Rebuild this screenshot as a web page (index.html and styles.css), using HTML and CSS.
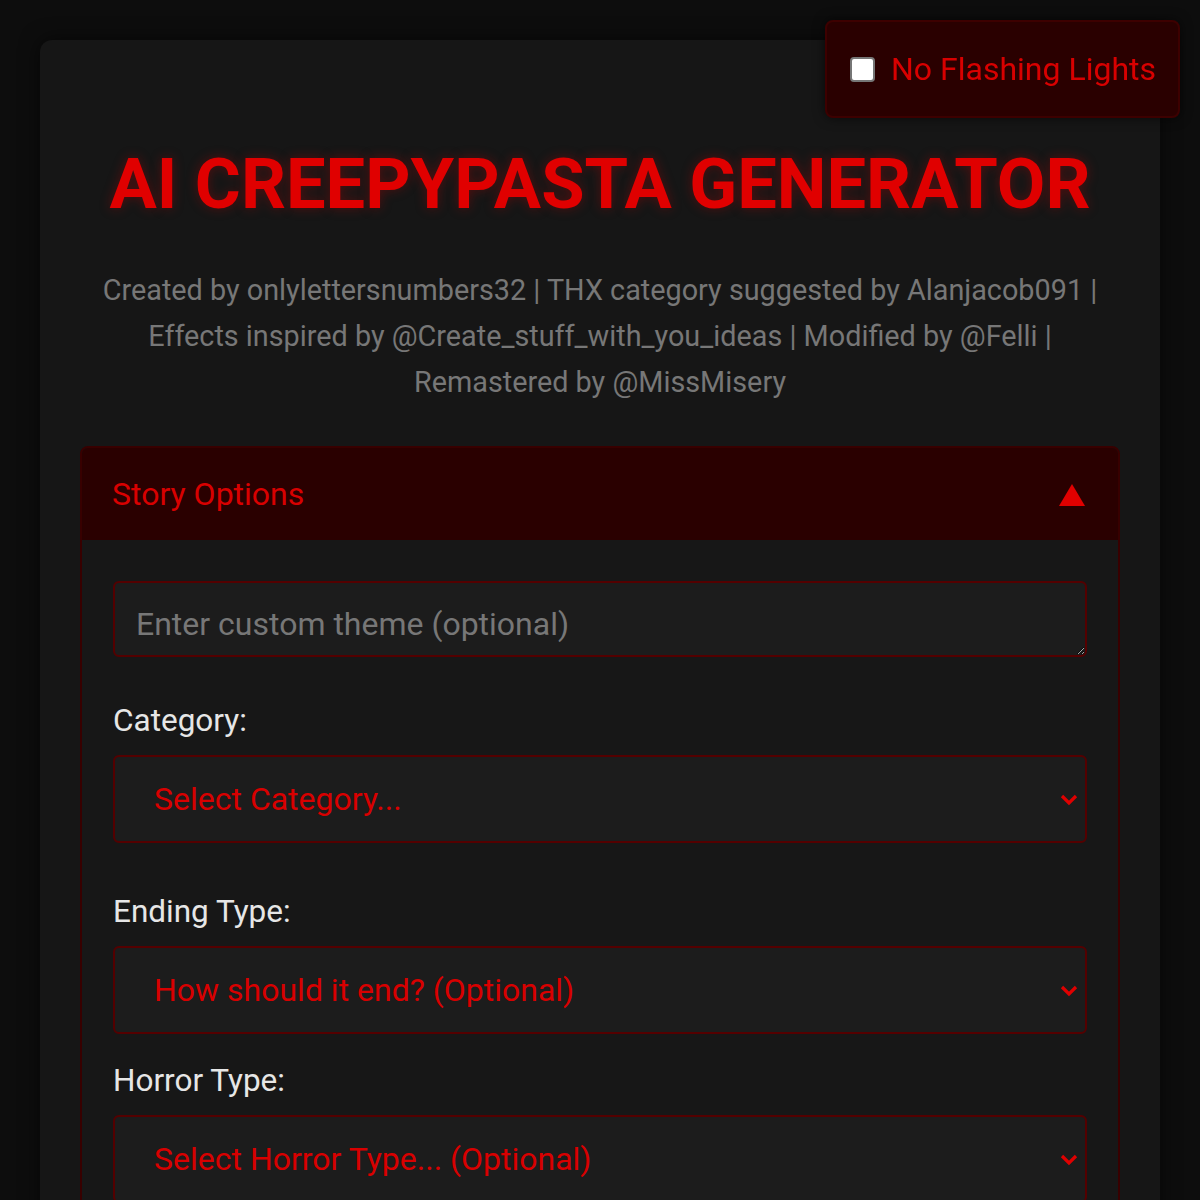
FILE: index.html
```html
<!DOCTYPE html>
<html lang="en">
<head>
<meta charset="utf-8">
<title>AI Creepypasta Generator</title>
<link rel="stylesheet" href="styles.css">
</head>
<body>
<label class="flash-toggle"><input type="checkbox" class="flash-check"><span>No Flashing Lights</span></label>
<main class="container">
  <h1 class="title">AI CREEPYPASTA GENERATOR</h1>
  <p class="credits">Created by onlylettersnumbers32 | THX category suggested by Alanjacob091 | Effects inspired by @Create_stuff_with_you_ideas | Modified by @Felli | Remastered by @MissMisery</p>
  <section class="panel">
    <div class="panel-header">
      <span class="panel-title">Story Options</span>
      <svg class="panel-arrow" width="26" height="22" viewBox="0 0 26 22"><polygon points="13,0 26,22 0,22" fill="#e00000"/></svg>
    </div>
    <div class="panel-body">
      <textarea class="theme-input" placeholder="Enter custom theme (optional)"></textarea>
      <label class="field-label">Category:</label>
      <div class="select-wrap select-wrap--spaced">
        <select class="field-select"><option>Select Category...</option></select>
        <svg class="chevron" width="18" height="12" viewBox="0 0 18 12"><polyline points="2,2 9,9 16,2" fill="none" stroke="#e00000" stroke-width="3.2"/></svg>
      </div>
      <label class="field-label">Ending Type:</label>
      <div class="select-wrap">
        <select class="field-select"><option>How should it end? (Optional)</option></select>
        <svg class="chevron" width="18" height="12" viewBox="0 0 18 12"><polyline points="2,2 9,9 16,2" fill="none" stroke="#e00000" stroke-width="3.2"/></svg>
      </div>
      <label class="field-label">Horror Type:</label>
      <div class="select-wrap">
        <select class="field-select"><option>Select Horror Type... (Optional)</option></select>
        <svg class="chevron" width="18" height="12" viewBox="0 0 18 12"><polyline points="2,2 9,9 16,2" fill="none" stroke="#e00000" stroke-width="3.2"/></svg>
      </div>
    </div>
  </section>
</main>
</body>
</html>
```
FILE: styles.css
```css
* { box-sizing: border-box; }
html, body { margin: 0; }
body {
  background: #0d0d0d;
  font-family: Roboto, "Liberation Sans", sans-serif;
  padding: 40px 40px 0;
  min-height: 1200px;
}
.container {
  background: #161616;
  border-radius: 12px;
  padding: 102px 40px 40px;
  box-shadow: 0 0 20px rgba(0,0,0,0.6);
}
.title {
  margin: 0;
  font-size: 70.4px;
  line-height: 84px;
  font-weight: 700;
  color: #e00000;
  text-align: center;
  text-shadow: 0 0 12px rgba(200,0,0,0.35);
}
.credits {
  margin: 41px 0 41px;
  font-size: 28.8px;
  line-height: 46px;
  color: #777;
  text-align: center;
  padding: 0 20px;
}
.panel {
  border: 2px solid #380000;
  border-radius: 8px;
  overflow: hidden;
}
.panel-header {
  background: #2a0000;
  height: 92px;
  display: flex;
  align-items: center;
  justify-content: space-between;
  padding: 0 33px 0 30px;
}
.panel-title {
  color: #d80000;
  font-size: 32px;
}
.panel-arrow { display: block; margin-top: 2px; }
.panel-body {
  background: #171717;
  padding: 41px 31px 40px;
}
.theme-input {
  display: block;
  width: 100%;
  height: 76px;
  background: #1c1c1c;
  border: 2px solid #540000;
  border-radius: 6px;
  padding: 22px 21px 10px;
  font-family: Roboto, "Liberation Sans", sans-serif;
  font-size: 32px;
  line-height: 38px;
  color: #ddd;
  margin: 0 0 45px;
}
.theme-input::placeholder { color: #777; }
.field-label {
  display: block;
  color: #e6e6e6;
  font-size: 31.5px;
  line-height: 38px;
  margin-bottom: 15px;
}
.select-wrap {
  position: relative;
  margin-bottom: 28px;
}
.select-wrap--spaced { margin-bottom: 50px; }
.field-select {
  display: block;
  width: 100%;
  height: 88px;
  appearance: none;
  -webkit-appearance: none;
  background: #1c1c1c;
  border: 2px solid #540000;
  border-radius: 6px;
  padding: 0 39px;
  font-family: Roboto, "Liberation Sans", sans-serif;
  font-size: 32px;
  color: #d80000;
}
.chevron {
  position: absolute;
  right: 9px;
  top: 39px;
  pointer-events: none;
}
.flash-toggle {
  position: fixed;
  top: 20px;
  right: 20px;
  height: 98px;
  display: flex;
  align-items: center;
  gap: 16px;
  padding: 0 22px 0 23px;
  white-space: nowrap;
  background: #2a0000;
  border: 2px solid #3d0000;
  border-radius: 8px;
  color: #d80000;
  font-size: 32px;
  box-shadow: 0 0 12px rgba(0,0,0,0.6);
}
.flash-check {
  appearance: none;
  -webkit-appearance: none;
  width: 25px;
  height: 25px;
  margin: 0;
  flex: none;
  background: #fff;
  border: 2px solid #767676;
  border-radius: 4px;
}
```
